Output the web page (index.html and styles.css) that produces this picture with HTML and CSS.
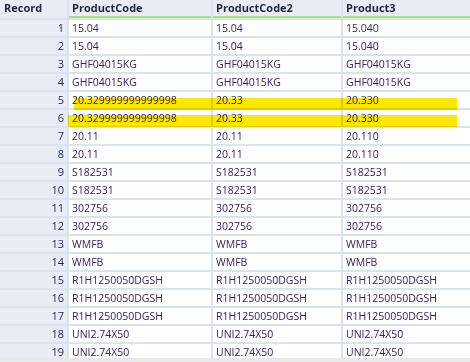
FILE: index.html
```html
<!DOCTYPE html>
<html>
<head>
<meta charset="utf-8">
<link rel="stylesheet" href="styles.css">
</head>
<body>
<div class="view">
  <div class="grid">
    <div class="hd rec">Record</div>
    <div class="hd col">ProductCode</div>
    <div class="hd col">ProductCode2</div>
    <div class="hd col">Product3</div>

    <div class="num">1</div><div class="cell">15.04</div><div class="cell">15.04</div><div class="cell">15.040</div>
    <div class="num">2</div><div class="cell">15.04</div><div class="cell">15.04</div><div class="cell">15.040</div>
    <div class="num">3</div><div class="cell">GHF04015KG</div><div class="cell">GHF04015KG</div><div class="cell">GHF04015KG</div>
    <div class="num">4</div><div class="cell">GHF04015KG</div><div class="cell">GHF04015KG</div><div class="cell">GHF04015KG</div>
    <div class="num">5</div><div class="cell">20.329999999999998</div><div class="cell">20.33</div><div class="cell">20.330</div>
    <div class="num">6</div><div class="cell">20.329999999999998</div><div class="cell">20.33</div><div class="cell">20.330</div>
    <div class="num">7</div><div class="cell">20.11</div><div class="cell">20.11</div><div class="cell">20.110</div>
    <div class="num">8</div><div class="cell">20.11</div><div class="cell">20.11</div><div class="cell">20.110</div>
    <div class="num">9</div><div class="cell">S182531</div><div class="cell">S182531</div><div class="cell">S182531</div>
    <div class="num">10</div><div class="cell">S182531</div><div class="cell">S182531</div><div class="cell">S182531</div>
    <div class="num">11</div><div class="cell">302756</div><div class="cell">302756</div><div class="cell">302756</div>
    <div class="num">12</div><div class="cell">302756</div><div class="cell">302756</div><div class="cell">302756</div>
    <div class="num">13</div><div class="cell">WMFB</div><div class="cell">WMFB</div><div class="cell">WMFB</div>
    <div class="num">14</div><div class="cell">WMFB</div><div class="cell">WMFB</div><div class="cell">WMFB</div>
    <div class="num">15</div><div class="cell">R1H1250050DGSH</div><div class="cell">R1H1250050DGSH</div><div class="cell">R1H1250050DGSH</div>
    <div class="num">16</div><div class="cell">R1H1250050DGSH</div><div class="cell">R1H1250050DGSH</div><div class="cell">R1H1250050DGSH</div>
    <div class="num">17</div><div class="cell">R1H1250050DGSH</div><div class="cell">R1H1250050DGSH</div><div class="cell">R1H1250050DGSH</div>
    <div class="num">18</div><div class="cell">UNI2.74X50</div><div class="cell">UNI2.74X50</div><div class="cell">UNI2.74X50</div>
    <div class="num">19</div><div class="cell">UNI2.74X50</div><div class="cell">UNI2.74X50</div><div class="cell">UNI2.74X50</div>
  </div>
  <div class="mark mark-a"></div>
  <div class="mark mark-b"></div>
</div>
</body>
</html>
```
FILE: styles.css
```css
html, body {
  margin: 0;
  padding: 0;
  background: #e9e9ea;
}
.view {
  position: relative;
  width: 470px;
  height: 362px;
  overflow: hidden;
  font-family: "Open Sans", "Noto Sans", sans-serif;
}
.grid {
  display: grid;
  grid-template-columns: 67px 142px 128px 1fr;
  grid-auto-rows: 16px;
  grid-template-rows: 18px;
  gap: 2px;
  background: #dce2ee;
  height: 358px;
  overflow: hidden;
}
.hd {
  background: #e8ecf5;
  font-size: 11px;
  font-weight: 700;
  color: #1c2838;
  line-height: 16px;
  box-sizing: border-box;
  white-space: nowrap;
}
.hd.rec {
  padding-left: 4px;
}
.hd.col {
  padding-left: 3px;
  border-bottom: 2px solid #9be77a;
}
.num {
  background: #e8ecf5;
  font-size: 11px;
  color: #1c2a4a;
  text-align: right;
  padding-right: 3px;
  line-height: 16px;
}
.cell {
  background: #ffffff;
  font-size: 10.5px;
  color: #33245a;
  line-height: 16px;
  padding-left: 3px;
  white-space: nowrap;
}
.mark {
  position: absolute;
  background: #ffe800;
  mix-blend-mode: multiply;
  height: 12px;
}
.mark-a {
  left: 74px;
  top: 98px;
  width: 383px;
}
.mark-b {
  left: 68px;
  top: 115px;
  width: 389px;
}
```
